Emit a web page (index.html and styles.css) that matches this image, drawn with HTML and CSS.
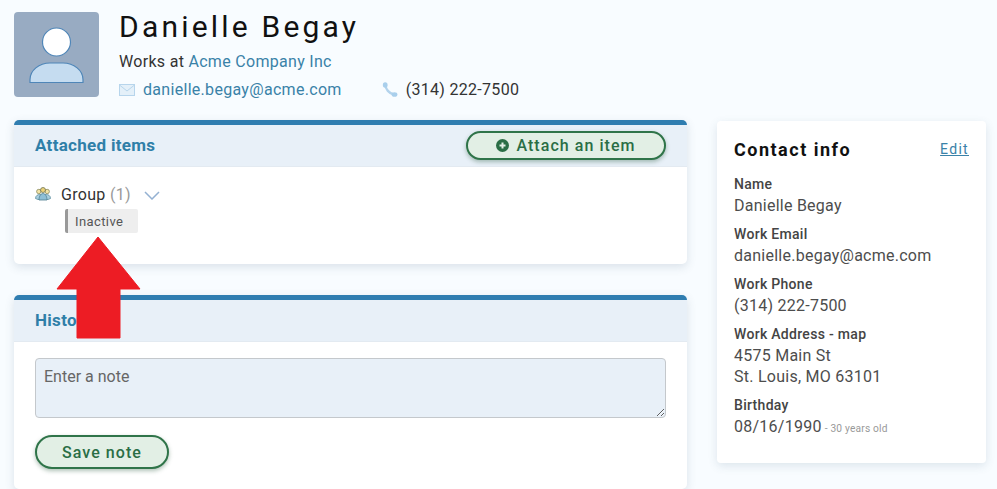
FILE: index.html
```html
<!DOCTYPE html>
<html>
<head>
  <title>Danielle Begay</title>
  <link rel="stylesheet" href="styles.css">
</head>
<body>
  <div class="profile">
    <div class="avatar">
      <svg width="85" height="85" viewBox="0 0 85 85">
        <circle cx="42.5" cy="41" r="14" fill="#fff" stroke="#4f86b8" stroke-width="1.2"/>
        <path d="M16 82 V79 C16 70 25 62.500 36 62.500 H49 C60 62.500 69 70 69 79 V82 Z" transform="translate(0 -0.500)" fill="#c5dcf0" stroke="#4f86b8" stroke-width="1.200"/>
      </svg>
    </div>
    <div class="profile-text">
      <h1>Danielle Begay</h1>
      <p class="works">Works at <a href="#">Acme Company Inc</a></p>
      <div class="reach">
        <span class="reach-item">
          <svg width="16" height="12" viewBox="0 0 16 12"><rect x="0.500" y="0.500" width="15" height="11" fill="#e4f0f9" stroke="#b7d5ec"/><path d="M0.500 1 L8 7 L15.500 1" fill="none" stroke="#b7d5ec"/></svg>
          <a href="#">danielle.begay@acme.com</a>
        </span>
        <span class="reach-item">
          <svg width="16" height="16" viewBox="0 0 16 16">
            <path d="M3.500 3 C3.500 7 7 11.500 12 12.500" fill="none" stroke="#b3d3ec" stroke-width="2.400"/>
            <ellipse cx="3.200" cy="3" rx="2.400" ry="2.800" fill="#a9cfec"/>
            <ellipse cx="12.500" cy="12.500" rx="2.900" ry="2.300" fill="#a9cfec"/>
          </svg>
          (314) 222-7500
        </span>
      </div>
    </div>
  </div>

  <div class="columns">
    <div class="main-col">
      <div class="card">
        <div class="card-head">
          <h2>Attached items</h2>
          <button class="green-button">
            <svg width="13" height="13" viewBox="0 0 13 13"><circle cx="6.500" cy="6.500" r="6.500" fill="#2a6e45"/><path d="M6.500 3.500 V9.500 M3.500 6.500 H9.500" stroke="#e2efe5" stroke-width="2"/></svg>
            Attach an item
          </button>
        </div>
        <div class="card-body attached">
          <div class="group-row">
            <svg width="16" height="14" viewBox="0 0 16 14">
              <circle cx="3.800" cy="4.500" r="2.200" fill="#f3e3a6" stroke="#8a8a5a" stroke-width="0.800"/>
              <circle cx="12.200" cy="4.500" r="2.200" fill="#f3e3a6" stroke="#8a8a5a" stroke-width="0.800"/>
              <circle cx="8" cy="3" r="2.500" fill="#ecd27a" stroke="#6f7350" stroke-width="0.800"/>
              <path d="M0.500 11.500 C0.500 8.500 3 7.500 4.500 7.500 H11.500 C13 7.500 15.500 8.500 15.500 11.500 L13 12.500 H3 Z" fill="#a9cfe0" stroke="#5f8f9f" stroke-width="0.800"/>
              <path d="M4 13 C4 9 6 6.500 8 6.500 C10 6.500 12 9 12 13 Z" fill="#8ebfd6" stroke="#4f7f8f" stroke-width="0.800"/>
            </svg>
            <span class="group-name">Group <span class="count">(1)</span></span>
            <svg class="chevron" width="16" height="9" viewBox="0 0 16 9"><path d="M1 1 L8 8 L15 1" fill="none" stroke="#94b1d2" stroke-width="1.500"/></svg>
          </div>
          <span class="tag">Inactive</span>
        </div>
      </div>

      <div class="card history">
        <div class="card-head">
          <h2>History</h2>
        </div>
        <div class="card-body">
          <textarea class="note" placeholder="Enter a note"></textarea>
          <button class="green-button save">Save note</button>
        </div>
      </div>
    </div>

    <div class="contact">
      <div class="contact-head">
        <h3>Contact info</h3>
        <a href="#">Edit</a>
      </div>
      <div class="field">
        <div class="label">Name</div>
        <div class="value">Danielle Begay</div>
      </div>
      <div class="field">
        <div class="label">Work Email</div>
        <div class="value">danielle.begay@acme.com</div>
      </div>
      <div class="field">
        <div class="label">Work Phone</div>
        <div class="value">(314) 222-7500</div>
      </div>
      <div class="field">
        <div class="label">Work Address - map</div>
        <div class="value">4575 Main St<br>St. Louis, MO 63101</div>
      </div>
      <div class="field">
        <div class="label">Birthday</div>
        <div class="value">08/16/1990<small>- 30 years old</small></div>
      </div>
    </div>
  </div>

  <svg class="arrow" width="85" height="103" viewBox="0 0 85 103">
    <path d="M42 1 L84 53 H64 V102 H21 V53 H1 Z" fill="#ed1c24" stroke="#ed1c24" stroke-linejoin="round"/>
  </svg>
</body>
</html>
```

FILE: styles.css
```css
html {
  overflow: hidden;
}

body {
  font-family: Roboto, sans-serif;
  background-color: #f8fcff;
  color: #333;
  margin: 0;
  padding: 12px 11px 0 14px;
  height: 477px;
  overflow: hidden;
  position: relative;
}

a {
  color: #3a82a8;
  text-decoration: none;
}

.profile {
  display: flex;
  gap: 20px;
  height: 108px;
}

.avatar {
  width: 85px;
  height: 85px;
  background-color: #98abc2;
  border-radius: 4px;
  overflow: hidden;
}

.avatar svg {
  display: block;
  margin-top: -11px;
}

h1 {
  margin: 0;
  color: #111;
  font-size: 30px;
  font-weight: 400;
  letter-spacing: 3.2px;
  line-height: 30px;
}

.works {
  margin: 10px 0 0;
  font-size: 16px;
  line-height: 19px;
  letter-spacing: 0.3px;
}

.reach {
  display: flex;
  gap: 40px;
  margin-top: 9px;
  font-size: 16px;
  line-height: 19px;
  letter-spacing: 0.3px;
}

.reach-item {
  display: flex;
  align-items: center;
  gap: 8px;
}

.columns {
  display: flex;
  gap: 30px;
}

.main-col {
  width: 673px;
  display: flex;
  flex-direction: column;
  gap: 31px;
}

.card {
  background-color: #fff;
  border-top: 5px solid #2f7db0;
  border-radius: 5px;
  box-shadow: 0 3px 10px rgba(60, 90, 120, 0.16);
}

.card-head {
  display: flex;
  align-items: center;
  justify-content: space-between;
  height: 41px;
  padding: 0 21px;
  background-color: #e8f0f8;
  border-bottom: 1px solid #e3eaf1;
}

h2 {
  margin: 0 0 2px;
  color: #2f7fa8;
  font-size: 17px;
  font-weight: 700;
  letter-spacing: 0.3px;
}

.card-body {
  padding: 16px 21px 20px;
}

.attached {
  height: 61px;
}

.green-button {
  display: inline-flex;
  align-items: center;
  justify-content: center;
  gap: 7px;
  height: 29px;
  width: 200px;
  padding: 0;
  background-color: #e2efe5;
  border: 2px solid #2f7449;
  border-radius: 15px;
  box-shadow: 0 2px 4px rgba(30, 80, 50, 0.35);
  color: #2a6e45;
  font-family: Roboto, sans-serif;
  font-size: 16px;
  font-weight: 500;
  letter-spacing: 1.05px;
}

.green-button.save {
  display: flex;
  width: 134px;
  height: 34px;
  border-radius: 17px;
  margin-top: 17px;
}

.group-row {
  display: flex;
  align-items: center;
  height: 22px;
}

.group-name {
  margin-left: 10px;
  font-size: 16px;
  letter-spacing: 0.3px;
}

.count {
  color: #999;
}

.chevron {
  margin-left: 13px;
  margin-top: 2px;
}

.tag {
  display: block;
  width: 63px;
  height: 24px;
  margin: 4px 0 0 30px;
  padding-left: 7px;
  background-color: #eeeeee;
  border-left: 3px solid #999;
  border-radius: 2px;
  color: #555;
  font-size: 13px;
  line-height: 25px;
  letter-spacing: 0.4px;
}

.note {
  display: block;
  box-sizing: border-box;
  width: 631px;
  height: 60px;
  padding: 8px;
  background-color: #e8f0f8;
  border: 1px solid #c4c8cc;
  border-radius: 4px;
  font-family: Roboto, sans-serif;
  font-size: 16px;
  color: #333;
}

.note::placeholder {
  color: #666;
}

.contact {
  box-sizing: border-box;
  width: 269px;
  height: 342px;
  margin-top: 1px;
  padding: 18px 17px 0;
  background-color: #fff;
  border-radius: 4px;
  box-shadow: 0 3px 10px rgba(60, 90, 120, 0.14);
}

.contact-head {
  display: flex;
  align-items: center;
  justify-content: space-between;
  height: 20px;
  margin-bottom: 15px;
}

h3 {
  margin: 0;
  color: #111;
  font-size: 18px;
  font-weight: 700;
  letter-spacing: 1.5px;
}

.contact-head a {
  font-size: 14px;
  letter-spacing: 1.3px;
  text-decoration: underline;
}

.field {
  margin-bottom: 8px;
}

.label {
  color: #444;
  font-size: 14px;
  font-weight: 500;
  line-height: 21px;
  letter-spacing: 0.3px;
}

.value {
  color: #4d4d4d;
  font-size: 16px;
  line-height: 21px;
  letter-spacing: 0.25px;
}

.value small {
  margin-left: 3px;
  color: #999;
  font-size: 10.200px;
  letter-spacing: 0.2px;
}

.arrow {
  position: absolute;
  left: 56px;
  top: 236px;
}
```
